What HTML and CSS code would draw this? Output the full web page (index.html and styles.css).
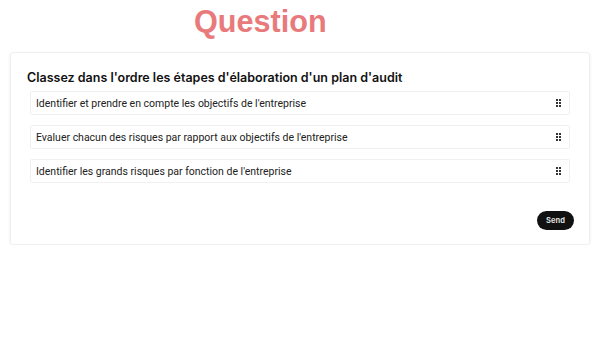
FILE: index.html
```
<!DOCTYPE html>
<html lang="fr">
<head>
<meta charset="utf-8">
<link rel="stylesheet" href="styles.css">
</head>
<body>
<div class="page">
  <h1 class="title">Question</h1>
  <div class="card">
    <h2 class="question">Classez dans l'ordre les étapes d'élaboration d'un plan d'audit</h2>
    <ul class="list">
      <li class="item"><span>Identifier et prendre en compte les objectifs de l'entreprise</span><span class="grip"><i></i><i></i><i></i><i></i><i></i><i></i></span></li>
      <li class="item"><span>Evaluer chacun des risques par rapport aux objectifs de l'entreprise</span><span class="grip"><i></i><i></i><i></i><i></i><i></i><i></i></span></li>
      <li class="item"><span>Identifier les grands risques par fonction de l'entreprise</span><span class="grip"><i></i><i></i><i></i><i></i><i></i><i></i></span></li>
    </ul>
    <div class="actions"><button class="send">Send</button></div>
  </div>
</div>
</body>
</html>
```
FILE: styles.css
```
* { box-sizing: border-box; }
html, body { margin: 0; padding: 0; background: #fff; }
body { font-family: "Inter", "Liberation Sans", sans-serif; color: #1f1f1f; }
.page { padding: 0 10px; }
.title {
  margin: 0;
  height: 52px;
  padding: 2px 0 0 184px;
  font-family: "Liberation Sans", Arial, sans-serif;
  font-weight: 700;
  font-size: 30.6px;
  line-height: 38px;
  color: #e97a7c;
}
.card {
  width: 580px;
  height: 193px;
  border: 1px solid #f0f0f0;
  border-radius: 3px;
  box-shadow: 0 1px 3px rgba(0,0,0,0.08);
  padding: 17px 19px 0 16px;
  display: flex;
  flex-direction: column;
}
.question {
  margin: 0 0 5px 0;
  font-size: 12.5px;
  font-weight: 600;
  line-height: 16px;
  color: #111;
}
.list { list-style: none; margin: 0 0 0 3px; padding: 0; display: flex; flex-direction: column; gap: 10px; }
.item {
  height: 24px;
  border: 1px solid #f0f0f0;
  border-radius: 2px;
  display: flex;
  align-items: center;
  justify-content: space-between;
  padding: 0 8px 0 5px;
  font-family: "Roboto", "Liberation Sans", sans-serif;
  font-size: 10.5px;
  color: #222;
}
.grip { display: grid; grid-template-columns: 2px 2px; gap: 1px; }
.grip i { display: block; width: 2px; height: 2px; background: #333; }
.actions { display: flex; justify-content: flex-end; margin: 28px -4px 0 0; }
.send {
  background: #111;
  color: #ddd;
  border: none;
  border-radius: 10px;
  height: 19px;
  width: 37px;
  padding: 0;
  font-family: "Inter", sans-serif;
  font-size: 7.5px;
  font-weight: 700;
}
```
